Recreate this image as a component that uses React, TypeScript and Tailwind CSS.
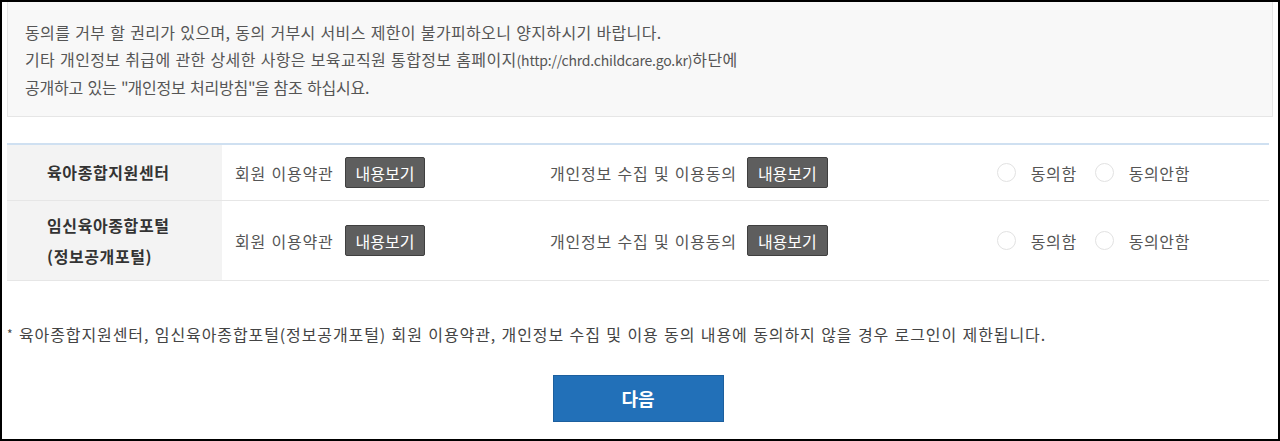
import { useState } from 'react'

const rows = [
  { id: 'center', title: ['육아종합지원센터'] },
  { id: 'portal', title: ['임신육아종합포털', '(정보공개포털)'] },
]

function ViewButton() {
  return (
    <button className="h-[31px] px-[10px] rounded-[2px] border border-[#3f3f3f] bg-[#5e5e5e] text-white text-[16px] leading-none tracking-normal">
      내용보기
    </button>
  )
}

function Radio({ checked, onClick, label }: { checked: boolean; onClick: () => void; label: string }) {
  return (
    <label className="flex items-center cursor-pointer" onClick={onClick}>
      <span className="w-[19px] h-[19px] rounded-full border border-[#e2e2e2] bg-white flex items-center justify-center">
        {checked && <span className="w-[9px] h-[9px] rounded-full bg-[#2270b8]" />}
      </span>
      <span className="ml-[15px]">{label}</span>
    </label>
  )
}

export default function App() {
  const [agree, setAgree] = useState<Record<string, boolean | null>>({ center: null, portal: null })

  return (
    <div
      className="w-[1280px] h-[441px] bg-white border-2 border-black text-[#555]"
      style={{ fontFamily: '"Noto Sans CJK KR", "Noto Sans", sans-serif' }}
    >
      <div className="ml-[5px] mr-[5px] bg-[#f8f8f8] border border-t-0 border-[#e6e6e6] h-[115px] pt-[17px] pl-[17px] text-[16px] leading-[27px] tracking-[0.35px] [word-spacing:1px]">
        <p>동의를 거부 할 권리가 있으며, 동의 거부시 서비스 제한이 불가피하오니 양지하시기 바랍니다.</p>
        <p>
          기타 개인정보 취급에 관한 상세한 사항은 보육교직원 통합정보 홈페이지
          <span className="text-[14px] tracking-[-0.2px]">(http://chrd.childcare.go.kr)</span>하단에
        </p>
        <p className="tracking-[-0.2px]">
          공개하고 있는 <span className="tracking-[-1px]">"</span>개인정보 처리방침
          <span className="tracking-[-1px]">"</span>을 참조 하십시요.
        </p>
      </div>

      <div className="mt-[26px] ml-[5px] mr-[9px] border-t-2 border-[#cfe0f1]">
        {rows.map((row) => (
          <div key={row.id} className="flex border-b border-[#e6e6e6] text-[16px] tracking-[0.8px] [word-spacing:1px]">
            <div
              className={`w-[215px] bg-[#f3f3f3] flex flex-col justify-center items-start pl-[40px] font-bold text-[#333] leading-[31px] tracking-[0.6px] ${
                row.title.length > 1 ? 'h-[79px]' : 'h-[55px]'
              }`}
            >
              {row.title.map((t) => (
                <span key={t}>{t}</span>
              ))}
            </div>
            <div className="flex-1 flex items-center pl-[13px]">
              <div className="w-[315px] flex items-center">
                <span>회원 이용약관</span>
                <span className="ml-[11px]">
                  <ViewButton />
                </span>
              </div>
              <div className="flex items-center">
                <span>개인정보 수집 및 이용동의</span>
                <span className="ml-[10px]">
                  <ViewButton />
                </span>
              </div>
              <div className="ml-auto mr-[79px] flex items-center gap-[18px] tracking-[0.6px]">
                <Radio
                  checked={agree[row.id] === true}
                  onClick={() => setAgree((p) => ({ ...p, [row.id]: true }))}
                  label="동의함"
                />
                <Radio
                  checked={agree[row.id] === false}
                  onClick={() => setAgree((p) => ({ ...p, [row.id]: false }))}
                  label="동의안함"
                />
              </div>
            </div>
          </div>
        ))}
      </div>

      <p className="mt-[41px] ml-[5px] text-[16px] text-[#444] tracking-[0.9px] [word-spacing:1px]">
        <span className="text-[12px] align-[2px]">*</span> 육아종합지원센터, 임신육아종합포털(정보공개포털) 회원 이용약관, 개인정보 수집 및 이용 동의 내용에 동의하지 않을 경우 로그인이 제한됩니다.
      </p>

      <div className="mt-[29px] flex justify-center">
        <button className="ml-[-4px] w-[171px] h-[47px] bg-[#2270b8] border border-[#1c5f9e] text-white text-[18px] font-bold">
          다음
        </button>
      </div>
    </div>
  )
}
